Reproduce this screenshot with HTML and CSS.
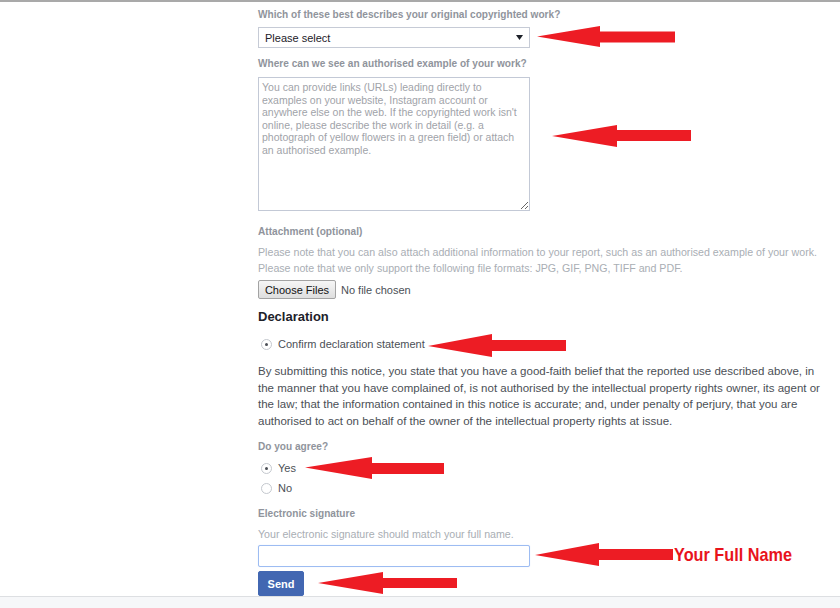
FILE: index.html
```html
<!DOCTYPE html>
<html lang="en">
<head>
<meta charset="utf-8">
<title>Copyright report form</title>
<link rel="stylesheet" href="styles.css">
</head>
<body>
<div class="page">
  <div class="topbar"></div>
  <main class="form">
    <div class="label">Which of these best describes your original copyrighted work?</div>
    <div class="select"><span>Please select</span><svg class="caret" width="7" height="5" viewBox="0 0 7 5"><polygon points="0,0 7,0 3.5,5"/></svg></div>
    <div class="label label-gap">Where can we see an authorised example of your work?</div>
    <textarea class="textarea" placeholder="You can provide links (URLs) leading directly to examples on your website, Instagram account or anywhere else on the web. If the copyrighted work isn't online, please describe the work in detail (e.g. a photograph of yellow flowers in a green field) or attach an authorised example."></textarea>
    <div class="label label-attach">Attachment (optional)</div>
    <div class="notes">
      <div>Please note that you can also attach additional information to your report, such as an authorised example of your work.</div>
      <div>Please note that we only support the following file formats: JPG, GIF, PNG, TIFF and PDF.</div>
    </div>
    <div class="file-row"><button class="file-btn" type="button">Choose Files</button><span class="file-status">No file chosen</span></div>
    <h2 class="heading">Declaration</h2>
    <div class="radio-row decl"><span class="radio checked"></span><span>Confirm declaration statement</span></div>
    <p class="statement">By submitting this notice, you state that you have a good-faith belief that the reported use described above, in the manner that you have complained of, is not authorised by the intellectual property rights owner, its agent or the law; that the information contained in this notice is accurate; and, under penalty of perjury, that you are authorised to act on behalf of the owner of the intellectual property rights at issue.</p>
    <div class="label label-agree">Do you agree?</div>
    <div class="radio-row yes"><span class="radio checked"></span><span>Yes</span></div>
    <div class="radio-row no"><span class="radio"></span><span>No</span></div>
    <div class="label label-sig">Electronic signature</div>
    <div class="hint">Your electronic signature should match your full name.</div>
    <input class="text-input" type="text" aria-label="Electronic signature">
    <button class="send" type="submit">Send</button>
  </main>
  <footer class="footer"></footer>

  <svg class="annotations" width="840" height="608" viewBox="0 0 840 608">
    <polygon points="537,36.5 600,26 600,31.5 675,31.5 675,42.5 600,42.5 600,47"/>
    <polygon points="552,136 617,125 617,130 691,130 691,141 617,141 617,147"/>
    <polygon points="428,346 492,334 492,340 566,340 566,351 492,351 492,357"/>
    <polygon points="305,467.5 372,457 372,463 444,463 444,474 372,474 372,479"/>
    <polygon points="535,555 599,543 599,549 673,549 673,560 599,560 599,566"/>
    <polygon points="318,583 383,572 383,578 457,578 457,588 383,588 383,594"/>
  </svg>
  <div class="callout">Your Full Name</div>
</div>
</body>
</html>
```

FILE: styles.css
```css
* { box-sizing: border-box; }

html, body {
  margin: 0;
  padding: 0;
  background: #ffffff;
}

body {
  font-family: "Liberation Sans", Arial, Helvetica, sans-serif;
  color: #4b4f56;
}

.page {
  position: relative;
  width: 840px;
  height: 608px;
  overflow: hidden;
  display: flex;
  flex-direction: column;
}

.topbar {
  height: 2px;
  background: #a9a9a9;
  flex: none;
}

.form {
  margin-left: 258px;
  width: 566px;
  display: flex;
  flex-direction: column;
  align-items: flex-start;
  flex: none;
}

.label {
  font-size: 10.1px;
  font-weight: bold;
  line-height: 12px;
  color: #90949c;
  margin-top: 7px;
}

.label-gap { margin-top: 10px; }
.label-attach { margin-top: 15px; }
.label-agree { margin-top: 12px; }
.label-sig { margin-top: 13px; }

.select {
  margin-top: 6px;
  width: 272px;
  height: 21px;
  border: 1px solid #c6cbd6;
  background: #fff;
  display: flex;
  align-items: center;
  justify-content: space-between;
  padding: 0 6px 0 6px;
  font-size: 11px;
  color: #1d2129;
}

.caret { fill: #1d2129; }

.textarea {
  display: block;
  margin-top: 7px;
  width: 272px;
  height: 134px;
  border: 1px solid #c3c9d6;
  border-radius: 0;
  padding: 3px 3px;
  font-family: "Liberation Sans", Arial, sans-serif;
  font-size: 10.5px;
  line-height: 12.6px;
  color: #1d2129;
  resize: vertical;
  background: #fff;
  outline: none;
}

.textarea::placeholder { color: #9fa3a9; opacity: 1; }

.notes {
  margin-top: 6px;
  font-size: 10.65px;
  line-height: 16px;
  color: #a9aeb4;
  white-space: nowrap;
}

.file-row {
  margin-top: 4px;
  display: flex;
  align-items: center;
  gap: 5px;
}

.file-btn {
  height: 19px;
  width: 78px;
  padding: 0;
  font-family: "Liberation Sans", Arial, sans-serif;
  font-size: 11px;
  color: #111;
  background: linear-gradient(#f6f6f6, #dedede);
  border: 1px solid #a3a3a3;
  border-radius: 2px;
}

.file-status {
  font-size: 11px;
  color: #4b4f56;
}

.heading {
  margin: 10px 0 0;
  font-size: 13px;
  line-height: 16px;
  font-weight: bold;
  color: #1d2129;
}

.radio-row {
  display: flex;
  align-items: center;
  height: 14px;
  font-size: 11px;
  color: #4b4f56;
}

.decl { margin-top: 12px; }
.yes { margin-top: 8px; }
.no { margin-top: 6px; }

.radio {
  width: 11px;
  height: 11px;
  margin: 0 6px 0 3px;
  border: 1px solid #c4c8ce;
  border-radius: 50%;
  background: #fff;
  display: flex;
  align-items: center;
  justify-content: center;
}

.radio.checked::after {
  content: "";
  width: 3px;
  height: 3px;
  border-radius: 50%;
  background: #4b4f56;
}

.statement {
  margin: 12px 0 0;
  width: 566px;
  font-size: 11.5px;
  line-height: 16.5px;
  color: #4b4f56;
}

.hint {
  margin-top: 7px;
  font-size: 10.65px;
  line-height: 14px;
  color: #a9aeb4;
}

.text-input {
  display: block;
  margin-top: 4px;
  width: 272px;
  height: 22px;
  border: 1px solid #9dbcf2;
  border-radius: 2px;
  box-shadow: 0 0 1px #c7d9fa;
  outline: none;
  background: #fff;
}

.send {
  margin-top: 4px;
  width: 46px;
  height: 25px;
  padding: 0;
  background: #4267b2;
  border: 1px solid #4267b2;
  border-radius: 2px;
  color: #fff;
  font-family: "Liberation Sans", Arial, sans-serif;
  font-size: 11px;
  font-weight: bold;
}

.footer {
  flex: 1;
  background: #f6f7f9;
  border-top: 1px solid #dddfe2;
}

.annotations {
  position: absolute;
  left: 0;
  top: 0;
  fill: #ed1c24;
  pointer-events: none;
}

.callout {
  position: absolute;
  left: 674px;
  top: 545px;
  font-family: "Liberation Sans", Arial, sans-serif;
  font-size: 19px;
  line-height: 19px;
  font-weight: bold;
  color: #e8131c;
  white-space: nowrap;
  transform: scaleX(0.855);
  transform-origin: left center;
}
```
